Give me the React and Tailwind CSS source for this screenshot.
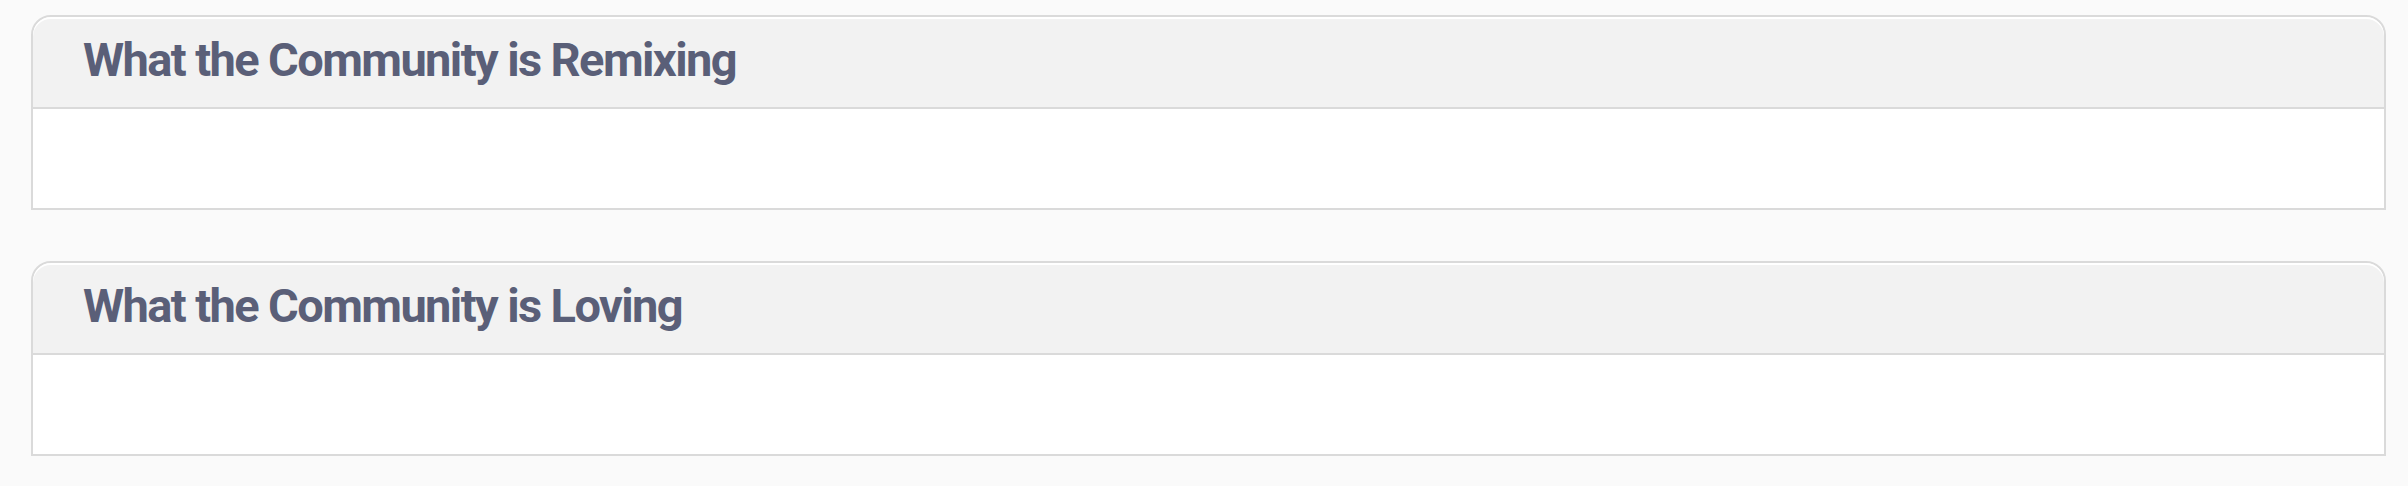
const sections = [
  { id: 'remixing', title: 'What the Community is Remixing' },
  { id: 'loving', title: 'What the Community is Loving' },
];

function SectionPanel({ title }) {
  return (
    <section className="border-2 border-[#dadada] rounded-t-[20px] overflow-hidden bg-white">
      <div className="h-[92px] flex items-center pl-[50px] pb-[6px] bg-[#f2f2f2] border-b-2 border-[#dadada] shadow-[inset_0_2px_0_#ffffff] rounded-t-[18px]">
        <h2 className="text-[47px] leading-none font-bold text-[#5a5f78] tracking-[-1.6px] font-['Roboto',sans-serif]">
          {title}
        </h2>
      </div>
      <div className="h-[99px] bg-white" />
    </section>
  );
}

export default function App() {
  return (
    <div className="min-h-[486px] bg-[#fafafa] pt-[15px] pl-[31px] pr-[22px] flex flex-col gap-[51px]">
      {sections.map(s => (
        <SectionPanel key={s.id} title={s.title} />
      ))}
    </div>
  );
}
